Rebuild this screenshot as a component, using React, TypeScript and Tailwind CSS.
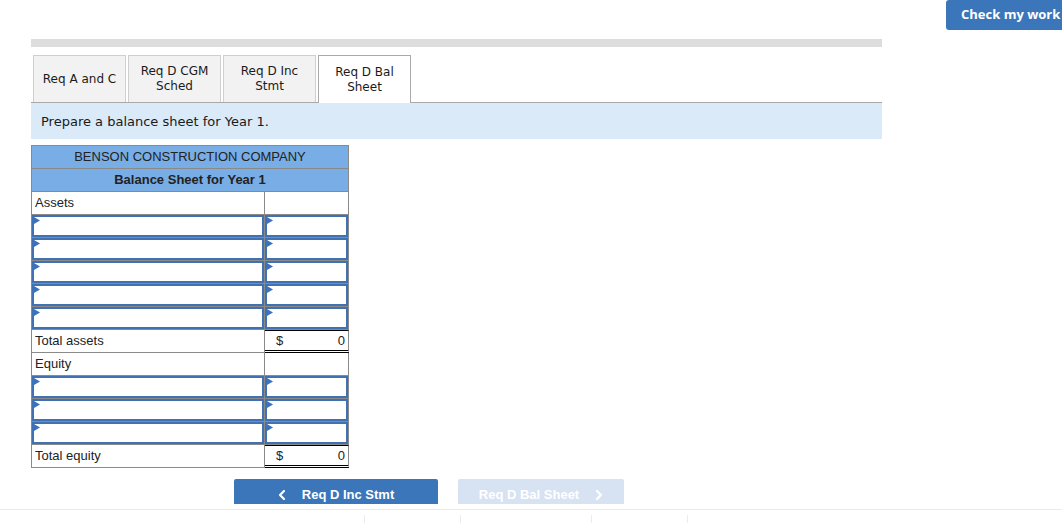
import type { ReactNode } from 'react'

const arial = "font-['Liberation_Sans',Arial,sans-serif]"

function Triangle() {
  return (
    <svg viewBox="0 0 6 7" className="absolute top-0 left-0 w-[6px] h-[7px]">
      <path d="M0 0 L6 3.5 L0 7 Z" fill="#3a72bd" />
    </svg>
  )
}

function InputBox() {
  return (
    <div className="relative h-full w-full border-2 border-[#4072b3] bg-white">
      <Triangle />
    </div>
  )
}

function Row({ left, right, total }: { left?: ReactNode; right?: ReactNode; total?: boolean }) {
  return (
    <div className="flex h-[23px]">
      <div className="w-[233px] border-r border-b border-[#8a8a8a] flex items-center pl-[3px] text-[13px] text-[#222]">
        {left}
      </div>
      <div
        className={[
          'w-[84px] border-r border-[#8a8a8a] flex items-center text-[13px] text-[#222]',
          total ? 'border-t border-t-black border-b-[3px] border-b-black border-double pl-[11px] pr-[3px] justify-between' : 'border-b',
        ].join(' ')}
      >
        {right}
      </div>
    </div>
  )
}

function InputRow() {
  return (
    <div className="flex h-[23px]">
      <div className="w-[233px] border-r border-b border-[#8a8a8a]">
        <InputBox />
      </div>
      <div className="w-[84px] border-r border-b border-[#8a8a8a]">
        <InputBox />
      </div>
    </div>
  )
}

function Chevron({ dir }: { dir: 'left' | 'right' }) {
  return (
    <svg viewBox="0 0 8 12" className="w-[8px] h-[12px]" fill="none" stroke="currentColor" strokeWidth="2.2" strokeLinecap="round" strokeLinejoin="round">
      {dir === 'left' ? <polyline points="6,2 2,6 6,10" /> : <polyline points="2,2 6,6 2,10" />}
    </svg>
  )
}

const tabs = [
  { label: 'Req A and C' },
  { label: 'Req D CGM', sub: 'Sched' },
  { label: 'Req D Inc', sub: 'Stmt' },
  { label: 'Req D Bal', sub: 'Sheet', active: true },
]

export default function App() {
  return (
    <div className="w-[1062px] h-[523px] overflow-hidden bg-white">
      <div className="flex justify-end h-[30px]">
        <button className="w-[116px] h-[30px] rounded-l-[3px] bg-[#3a76b9] text-white text-[13px] font-bold font-['Open_Sans',sans-serif] whitespace-nowrap flex items-center pl-[15px]">
          Check my work
        </button>
      </div>

      <div className="ml-[31px] w-[851px]">
        <div className="mt-[9px] h-[8px] bg-[#dddddd]" />

        <div className="mt-[8px] flex gap-[2px] pl-[2px] font-['DejaVu_Sans',Verdana,sans-serif] text-[12px] text-[#1a1a1a]">
          {tabs.map((t) => (
            <div
              key={t.label}
              className={[
                'w-[93px] h-[47px] flex flex-col items-center justify-center leading-[15px] border border-b-0',
                t.active ? 'bg-white border-[#a9a9a9] h-[48px] -mb-[1px] relative z-10' : 'bg-[#f2f2f2] border-[#cfcfcf]',
              ].join(' ')}
            >
              <span>{t.label}</span>
              {t.sub && <span>{t.sub}</span>}
            </div>
          ))}
        </div>

        <div className="border-t border-[#a9a9a9] bg-[#dbeaf8] h-[37px] flex items-center pl-[10px] pt-[1px] font-['DejaVu_Sans',Verdana,sans-serif] text-[13px] text-[#1a1a1a]">
          Prepare a balance sheet for Year 1.
        </div>

        <div className={`mt-[6px] w-[318px] border-l border-t border-[#8a8a8a] ${arial}`}>
          <div className="h-[23px] bg-[#79ade5] border-r border-b border-[#8a8a8a] flex items-center justify-center text-[13px] text-[#222]">
            BENSON CONSTRUCTION COMPANY
          </div>
          <div className="h-[23px] bg-[#79ade5] border-r border-b border-[#8a8a8a] flex items-center justify-center text-[13px] font-bold text-[#222]">
            Balance Sheet for Year 1
          </div>
          <Row left="Assets" />
          <InputRow />
          <InputRow />
          <InputRow />
          <InputRow />
          <InputRow />
          <Row
            left="Total assets"
            total
            right={
              <>
                <span>$</span>
                <span>0</span>
              </>
            }
          />
          <Row left="Equity" />
          <InputRow />
          <InputRow />
          <InputRow />
          <Row
            left="Total equity"
            total
            right={
              <>
                <span>$</span>
                <span>0</span>
              </>
            }
          />
        </div>

        <div className={`mt-[11px] ml-[203px] h-[25px] overflow-hidden flex gap-[20px] ${arial} text-[13px] font-bold text-white`}>
          <button className="w-[204px] h-[32px] bg-[#3a76b9] rounded-[2px] flex items-center justify-center gap-[16px]">
            <Chevron dir="left" />
            <span>Req D Inc Stmt</span>
          </button>
          <button className="w-[166px] h-[32px] bg-[#d7e3f2] rounded-[2px] flex items-center justify-center gap-[16px]">
            <span>Req D Bal Sheet</span>
            <Chevron dir="right" />
          </button>
        </div>
      </div>

      <div className="mt-[5px] border-t border-[#ececec]" />
      <div className="mt-[5px] flex pl-[364px] h-[10px]">
        <div className="w-[96px] border-l border-[#ececec]" />
        <div className="w-[131px] border-l border-[#ececec]" />
        <div className="w-[96px] border-l border-[#ececec]" />
        <div className="w-[1px] border-l border-[#ececec]" />
      </div>
    </div>
  )
}
